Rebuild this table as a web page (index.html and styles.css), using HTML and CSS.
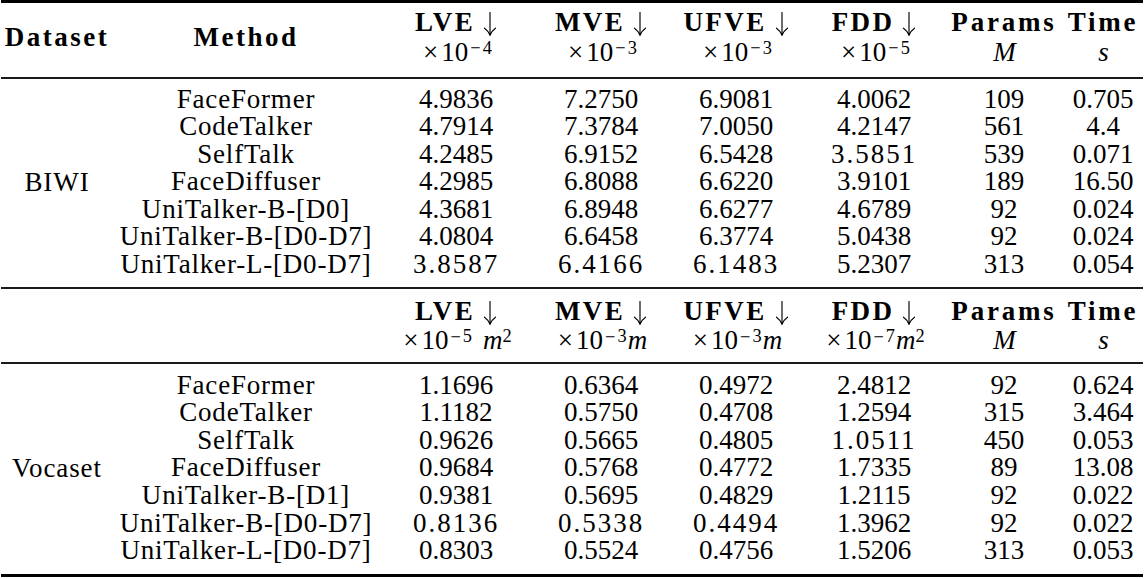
FILE: index.html
```html
<!DOCTYPE html>
<html lang="en">
<head>
<meta charset="utf-8">
<title>UniTalker comparison table</title>
<link rel="stylesheet" href="styles.css">
</head>
<body>
<table class="results">
  <colgroup>
    <col class="c-ds"><col class="c-method"><col class="c-lve"><col class="c-mve">
    <col class="c-ufve"><col class="c-fdd"><col class="c-params"><col class="c-time">
  </colgroup>
  <thead>
    <tr class="head head-first">
      <th class="lbl"><span class="bold">Dataset</span></th>
      <th class="lbl"><span class="bold">Method</span></th>
      <th><div class="h-name"><span class="bold">LVE</span><svg class="arrow" viewBox="0 0 14 24" aria-hidden="true"><path d="M7 0.5V23M1.5 16.2C4.4 18.2 6 20.4 7 23.4C8 20.4 9.6 18.2 12.5 16.2"/></svg></div><div class="h-unit"><span class="times">×</span>10<sup><span class="minus">−</span>4</sup></div></th>
      <th><div class="h-name"><span class="bold">MVE</span><svg class="arrow" viewBox="0 0 14 24" aria-hidden="true"><path d="M7 0.5V23M1.5 16.2C4.4 18.2 6 20.4 7 23.4C8 20.4 9.6 18.2 12.5 16.2"/></svg></div><div class="h-unit"><span class="times">×</span>10<sup><span class="minus">−</span>3</sup></div></th>
      <th><div class="h-name"><span class="bold">UFVE</span><svg class="arrow" viewBox="0 0 14 24" aria-hidden="true"><path d="M7 0.5V23M1.5 16.2C4.4 18.2 6 20.4 7 23.4C8 20.4 9.6 18.2 12.5 16.2"/></svg></div><div class="h-unit"><span class="times">×</span>10<sup><span class="minus">−</span>3</sup></div></th>
      <th><div class="h-name"><span class="bold">FDD</span><svg class="arrow" viewBox="0 0 14 24" aria-hidden="true"><path d="M7 0.5V23M1.5 16.2C4.4 18.2 6 20.4 7 23.4C8 20.4 9.6 18.2 12.5 16.2"/></svg></div><div class="h-unit"><span class="times">×</span>10<sup><span class="minus">−</span>5</sup></div></th>
      <th><div class="h-name"><span class="bold">Params</span></div><div class="h-unit"><i class="mi">M</i></div></th>
      <th><div class="h-name"><span class="bold">Time</span></div><div class="h-unit"><i class="mi">s</i></div></th>
    </tr>
  </thead>
  <tbody class="group group-biwi">
    <tr class="first"><td class="dataset" rowspan="7">BIWI</td><td class="method">FaceFormer</td><td>4.9836</td><td>7.2750</td><td>6.9081</td><td>4.0062</td><td>109</td><td>0.705</td></tr>
    <tr><td class="method">CodeTalker</td><td>4.7914</td><td>7.3784</td><td>7.0050</td><td>4.2147</td><td>561</td><td>4.4</td></tr>
    <tr><td class="method">SelfTalk</td><td>4.2485</td><td>6.9152</td><td>6.5428</td><td class="best">3.5851</td><td>539</td><td>0.071</td></tr>
    <tr><td class="method">FaceDiffuser</td><td>4.2985</td><td>6.8088</td><td>6.6220</td><td>3.9101</td><td>189</td><td>16.50</td></tr>
    <tr><td class="method">UniTalker-B-[D0]</td><td>4.3681</td><td>6.8948</td><td>6.6277</td><td>4.6789</td><td>92</td><td>0.024</td></tr>
    <tr><td class="method">UniTalker-B-[D0-D7]</td><td>4.0804</td><td>6.6458</td><td>6.3774</td><td>5.0438</td><td>92</td><td>0.024</td></tr>
    <tr class="last"><td class="method">UniTalker-L-[D0-D7]</td><td class="best">3.8587</td><td class="best">6.4166</td><td class="best">6.1483</td><td>5.2307</td><td>313</td><td>0.054</td></tr>
  </tbody>
  <tbody class="subhead">
    <tr class="head head-second">
      <th></th>
      <th></th>
      <th><div class="h-name"><span class="bold">LVE</span><svg class="arrow" viewBox="0 0 14 24" aria-hidden="true"><path d="M7 0.5V23M1.5 16.2C4.4 18.2 6 20.4 7 23.4C8 20.4 9.6 18.2 12.5 16.2"/></svg></div><div class="h-unit"><span class="times">×</span>10<sup><span class="minus">−</span>5</sup><span class="gap"></span><i class="mi">m</i><sup>2</sup></div></th>
      <th><div class="h-name"><span class="bold">MVE</span><svg class="arrow" viewBox="0 0 14 24" aria-hidden="true"><path d="M7 0.5V23M1.5 16.2C4.4 18.2 6 20.4 7 23.4C8 20.4 9.6 18.2 12.5 16.2"/></svg></div><div class="h-unit"><span class="times">×</span>10<sup><span class="minus">−</span>3</sup><i class="mi">m</i></div></th>
      <th><div class="h-name"><span class="bold">UFVE</span><svg class="arrow" viewBox="0 0 14 24" aria-hidden="true"><path d="M7 0.5V23M1.5 16.2C4.4 18.2 6 20.4 7 23.4C8 20.4 9.6 18.2 12.5 16.2"/></svg></div><div class="h-unit"><span class="times">×</span>10<sup><span class="minus">−</span>3</sup><i class="mi">m</i></div></th>
      <th><div class="h-name"><span class="bold">FDD</span><svg class="arrow" viewBox="0 0 14 24" aria-hidden="true"><path d="M7 0.5V23M1.5 16.2C4.4 18.2 6 20.4 7 23.4C8 20.4 9.6 18.2 12.5 16.2"/></svg></div><div class="h-unit"><span class="times">×</span>10<sup><span class="minus">−</span>7</sup><i class="mi">m</i><sup>2</sup></div></th>
      <th><div class="h-name"><span class="bold">Params</span></div><div class="h-unit"><i class="mi">M</i></div></th>
      <th><div class="h-name"><span class="bold">Time</span></div><div class="h-unit"><i class="mi">s</i></div></th>
    </tr>
  </tbody>
  <tbody class="group group-voca">
    <tr class="first"><td class="dataset" rowspan="7">Vocaset</td><td class="method">FaceFormer</td><td>1.1696</td><td>0.6364</td><td>0.4972</td><td>2.4812</td><td>92</td><td>0.624</td></tr>
    <tr><td class="method">CodeTalker</td><td>1.1182</td><td>0.5750</td><td>0.4708</td><td>1.2594</td><td>315</td><td>3.464</td></tr>
    <tr><td class="method">SelfTalk</td><td>0.9626</td><td>0.5665</td><td>0.4805</td><td class="best">1.0511</td><td>450</td><td>0.053</td></tr>
    <tr><td class="method">FaceDiffuser</td><td>0.9684</td><td>0.5768</td><td>0.4772</td><td>1.7335</td><td>89</td><td>13.08</td></tr>
    <tr><td class="method">UniTalker-B-[D1]</td><td>0.9381</td><td>0.5695</td><td>0.4829</td><td>1.2115</td><td>92</td><td>0.022</td></tr>
    <tr><td class="method">UniTalker-B-[D0-D7]</td><td class="best">0.8136</td><td class="best">0.5338</td><td class="best">0.4494</td><td>1.3962</td><td>92</td><td>0.022</td></tr>
    <tr class="last"><td class="method">UniTalker-L-[D0-D7]</td><td>0.8303</td><td>0.5524</td><td>0.4756</td><td>1.5206</td><td>313</td><td>0.053</td></tr>
  </tbody>
</table>
</body>
</html>
```
FILE: styles.css
```css
html, body {
  margin: 0;
  padding: 0;
  background: #ffffff;
}

body {
  font-family: "Liberation Serif", "Times New Roman", serif;
  font-size: 27px;
  color: #000000;
}

.results {
  margin-left: 1px;
  width: 1142px;
  table-layout: fixed;
  border-collapse: separate;
  border-spacing: 0;
  border-top: 3px solid #000000;
  border-bottom: 3px solid #000000;
}

.c-ds { width: 112px; }
.c-method { width: 266px; }
.c-lve { width: 154px; }
.c-mve { width: 136px; }
.c-ufve { width: 134px; }
.c-fdd { width: 142px; }
.c-params { width: 118px; }
.c-time { width: 80px; }

.results th,
.results td {
  padding: 0;
  text-align: center;
  white-space: nowrap;
  font-weight: normal;
}

/* header rows */
.head th {
  vertical-align: middle;
  border-bottom: 2px solid #1a1a1a;
}

.head-first th {
  padding-top: 5px;
  padding-bottom: 11px;
}

.head-first .h-unit {
  margin-top: 2px;
}

.head-second th {
  border-top: 2px solid #1a1a1a;
  padding-top: 8px;
  padding-bottom: 8px;
}

.head-second .h-unit {
  margin-top: 1px;
}

.h-name,
.h-unit {
  height: 28px;
  line-height: 28px;
}

.bold {
  font-weight: bold;
  letter-spacing: 2.4px;
}

.lbl .bold {
  letter-spacing: 2.5px;
}

.head-first th:nth-child(7) .bold,
.head-first th:nth-child(8) .bold,
.head-second th:nth-child(7) .bold,
.head-second th:nth-child(8) .bold {
  letter-spacing: 2.8px;
}

.arrow {
  width: 14px;
  height: 24px;
  margin-left: 8px;
  vertical-align: -5px;
  fill: none;
  stroke: #000000;
  stroke-width: 1.15;
  stroke-linecap: round;
}

.times {
  padding: 0 3px;
}

.h-unit sup {
  font-size: 0.68em;
  line-height: 0;
  vertical-align: 0.36em;
}

.minus {
  padding: 0 2px;
}

.gap {
  display: inline-block;
  width: 10px;
}

.mi {
  font-style: italic;
  padding-left: 1px;
}

/* body groups */
.group td {
  line-height: 27.6px;
}

.group-biwi .first td { padding-top: 6.5px; }
.group-biwi .last td { padding-bottom: 8.5px; }
.group-voca .first td { padding-top: 7.5px; }
.group-voca .last td { padding-bottom: 9.3px; }

.group td.dataset {
  padding: 0;
  vertical-align: middle;
  letter-spacing: 0.9px;
}

.method {
  letter-spacing: 0.8px;
}

.best {
  font-weight: bold;
  letter-spacing: 2px;
}
```
